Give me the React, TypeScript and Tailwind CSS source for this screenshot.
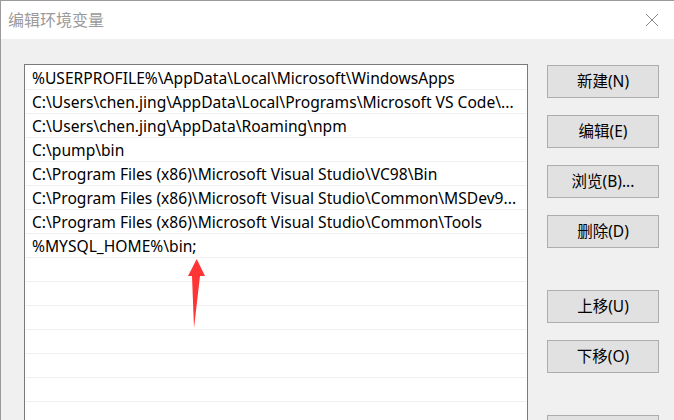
import React from "react";

const rows = [
  "%USERPROFILE%\\AppData\\Local\\Microsoft\\WindowsApps",
  "C:\\Users\\chen.jing\\AppData\\Local\\Programs\\Microsoft VS Code\\...",
  "C:\\Users\\chen.jing\\AppData\\Roaming\\npm",
  "C:\\pump\\bin",
  "C:\\Program Files (x86)\\Microsoft Visual Studio\\VC98\\Bin",
  "C:\\Program Files (x86)\\Microsoft Visual Studio\\Common\\MSDev9...",
  "C:\\Program Files (x86)\\Microsoft Visual Studio\\Common\\Tools",
  "%MYSQL_HOME%\\bin;",
  "",
  "",
  "",
  "",
  "",
  "",
  "",
];

function Btn({ label, className = "" }: { label: string; className?: string }) {
  return (
    <div
      className={
        "w-[112px] h-[33px] shrink-0 bg-[#e1e1e1] border border-[#adadad] flex items-center justify-center text-[15.5px] text-black " +
        className
      }
    >
      {label}
    </div>
  );
}

export default function App() {
  return (
    <div
      className="relative w-[674px] h-[420px] overflow-hidden bg-[#f0f0f0] border-t border-l border-[#9a9a9a]"
      style={{ fontFamily: '"Noto Sans", "Noto Sans CJK SC", sans-serif' }}
    >
      <div className="h-[38px] bg-white flex items-center justify-between pl-[7px] pr-[14px]">
        <span className="text-[16px] text-[#9a9a9a]">编辑环境变量</span>
        <svg width="14" height="14" viewBox="0 0 14 14" className="mr-[1px]">
          <path d="M1 1 L13 13 M13 1 L1 13" stroke="#8a8a8a" strokeWidth="1" fill="none" />
        </svg>
      </div>
      <div className="flex pl-[23px] pt-[25px]">
        <div className="w-[504px] h-[400px] shrink-0 bg-white border border-[#7a7a7a] pt-[1px]">
          {rows.map((r, i) => (
            <div
              key={i}
              className="h-[24px] mx-[1px] border-b border-[#f0f0f0] flex items-center pl-[6px] pt-[2px] text-[15.6px] text-black whitespace-nowrap overflow-hidden leading-none"
            >
              {r}
            </div>
          ))}
        </div>
        <div className="ml-[19px] mt-[1px] flex flex-col">
          <Btn label="新建(N)" />
          <Btn label="编辑(E)" className="mt-[17px]" />
          <Btn label="浏览(B)..." className="mt-[17px]" />
          <Btn label="删除(D)" className="mt-[17px]" />
          <Btn label="上移(U)" className="mt-[42px]" />
          <Btn label="下移(O)" className="mt-[17px]" />
          <Btn label="" className="mt-[42px]" />
        </div>
      </div>
      <svg
        className="absolute left-[185px] top-[256px]"
        width="22"
        height="74"
        viewBox="0 0 22 74"
      >
        <path d="M10.7 2 L19 19 L14 19 L8 71 L6 19 L2 19 Z" fill="#ff3535" />
      </svg>
    </div>
  );
}
